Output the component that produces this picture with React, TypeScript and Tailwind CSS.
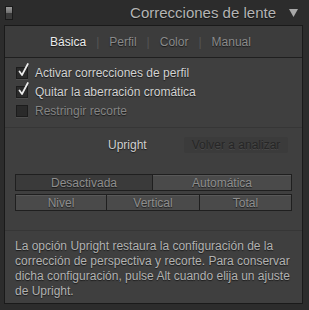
import React from "react";

const shadow = "[text-shadow:0_1px_1px_rgba(0,0,0,0.6)]";

function Check({ checked }: { checked: boolean }) {
  return (
    <div className="relative w-[12px] h-[12px] shrink-0">
      <div className="absolute inset-0 bg-[#2a2a2a] border border-[#1c1c1c] shadow-[0_1px_0_rgba(255,255,255,0.08)]" />
      {checked && (
        <svg className="absolute left-[2px] top-[-4px]" width="11" height="14" viewBox="0 0 11 14">
          <path d="M1.5 8.5 L4 12 L9.8 1" fill="none" stroke="#ececec" strokeWidth="1.7" strokeLinecap="round" strokeLinejoin="round" />
        </svg>
      )}
    </div>
  );
}

function Seg({ label, active, className = "" }: { label: string; active?: boolean; className?: string }) {
  return (
    <div
      className={`flex items-center justify-center h-full text-[12px] text-[#8e8e8e] ${shadow} ${
        active ? "bg-[#3a3a3a]" : "bg-[#4a4a4a] shadow-[inset_0_1px_0_rgba(255,255,255,0.08)]"
      } ${className}`}
    >
      {label}
    </div>
  );
}

export default function App() {
  return (
    <div
      className="w-[309px] h-[310px] bg-[#2c2c2c] flex flex-col overflow-hidden"
      style={{ fontFamily: '"Liberation Sans", Arial, sans-serif' }}
    >
      <div className="h-[25px] flex items-center pl-[5px] pr-[11px] shrink-0">
        <div className="w-[8px] h-[14px] border border-[#1a1a1a] flex flex-col">
          <div className="h-[6px] bg-[linear-gradient(#9a9a9a,#6e6e6e)]" />
          <div className="flex-1 bg-[#3a3a3a]" />
        </div>
        <div className={`ml-auto text-[15px] leading-none text-[#b4b4b4] ${shadow}`}>Correcciones de lente</div>
        <svg className="ml-[13px]" width="9" height="9" viewBox="0 0 9 9">
          <path d="M0 1 L9 1 L4.5 9 Z" fill="#a8a8a8" />
        </svg>
      </div>

      <div className="ml-[4px] mr-[6px] h-[279px] border border-[#1a1a1a] bg-[#3f3f3f] flex flex-col shrink-0">
        <div className="h-[32px] bg-[#3c3c3c] border-b border-[#1f1f1f] flex items-center justify-center gap-[10px] text-[12px] pr-[6px] shrink-0">
          <span className={`text-[#ececec] ${shadow}`}>Básica</span>
          <span className="text-[#555]">|</span>
          <span className={`text-[#8a8a8a] ${shadow}`}>Perfil</span>
          <span className="text-[#555]">|</span>
          <span className={`text-[#8a8a8a] ${shadow}`}>Color</span>
          <span className="text-[#555]">|</span>
          <span className={`text-[#8a8a8a] ${shadow}`}>Manual</span>
        </div>

        <div className="pt-[5px] pb-[7px] pl-[11px] border-b border-[#363636] shrink-0">
          <div className="h-[19px] flex items-center gap-[7px]">
            <Check checked />
            <span className={`text-[12px] text-[#d2d2d2] ${shadow}`}>Activar correcciones de perfil</span>
          </div>
          <div className="h-[19px] flex items-center gap-[7px]">
            <Check checked />
            <span className={`text-[12px] text-[#d2d2d2] ${shadow}`}>Quitar la aberración cromática</span>
          </div>
          <div className="h-[19px] flex items-center gap-[7px]">
            <Check checked={false} />
            <span className={`text-[12px] text-[#858585] ${shadow}`}>Restringir recorte</span>
          </div>
        </div>

        <div className="pt-[9px] px-[10px] shrink-0">
          <div className="h-[16px] flex items-center">
            <span className={`ml-[93px] text-[12px] text-[#d0d0d0] ${shadow}`}>Upright</span>
            <div className="ml-auto mr-[4px] w-[104px] h-[16px] bg-[#3b3b3b] rounded-[2px] flex items-center justify-center text-[12px] text-[#262626] [text-shadow:0_1px_0_rgba(255,255,255,0.08)]">
              Volver a analizar
            </div>
          </div>

          <div className="mt-[21px] h-[17px] border border-[#1f1f1f] flex">
            <Seg label="Desactivada" active className="w-[137px] border-r border-[#1f1f1f]" />
            <Seg label="Automática" className="flex-1" />
          </div>
          <div className="mt-[3px] h-[17px] border border-[#1f1f1f] flex">
            <Seg label="Nivel" className="w-[91px] border-r border-[#1f1f1f]" />
            <Seg label="Vertical" className="w-[93px] border-r border-[#1f1f1f]" />
            <Seg label="Total" className="flex-1" />
          </div>
        </div>

        <div className="mt-[19px] border-t border-[#363636] pt-[8px] pl-[10px] pr-[6px] shrink-0">
          <p className={`text-[12px] leading-[15px] text-[#b2b2b2] ${shadow}`}>
            La opción Upright restaura la configuración de la corrección de perspectiva y recorte. Para conservar dicha configuración, pulse Alt cuando elija un ajuste de Upright.
          </p>
        </div>
      </div>
    </div>
  );
}
